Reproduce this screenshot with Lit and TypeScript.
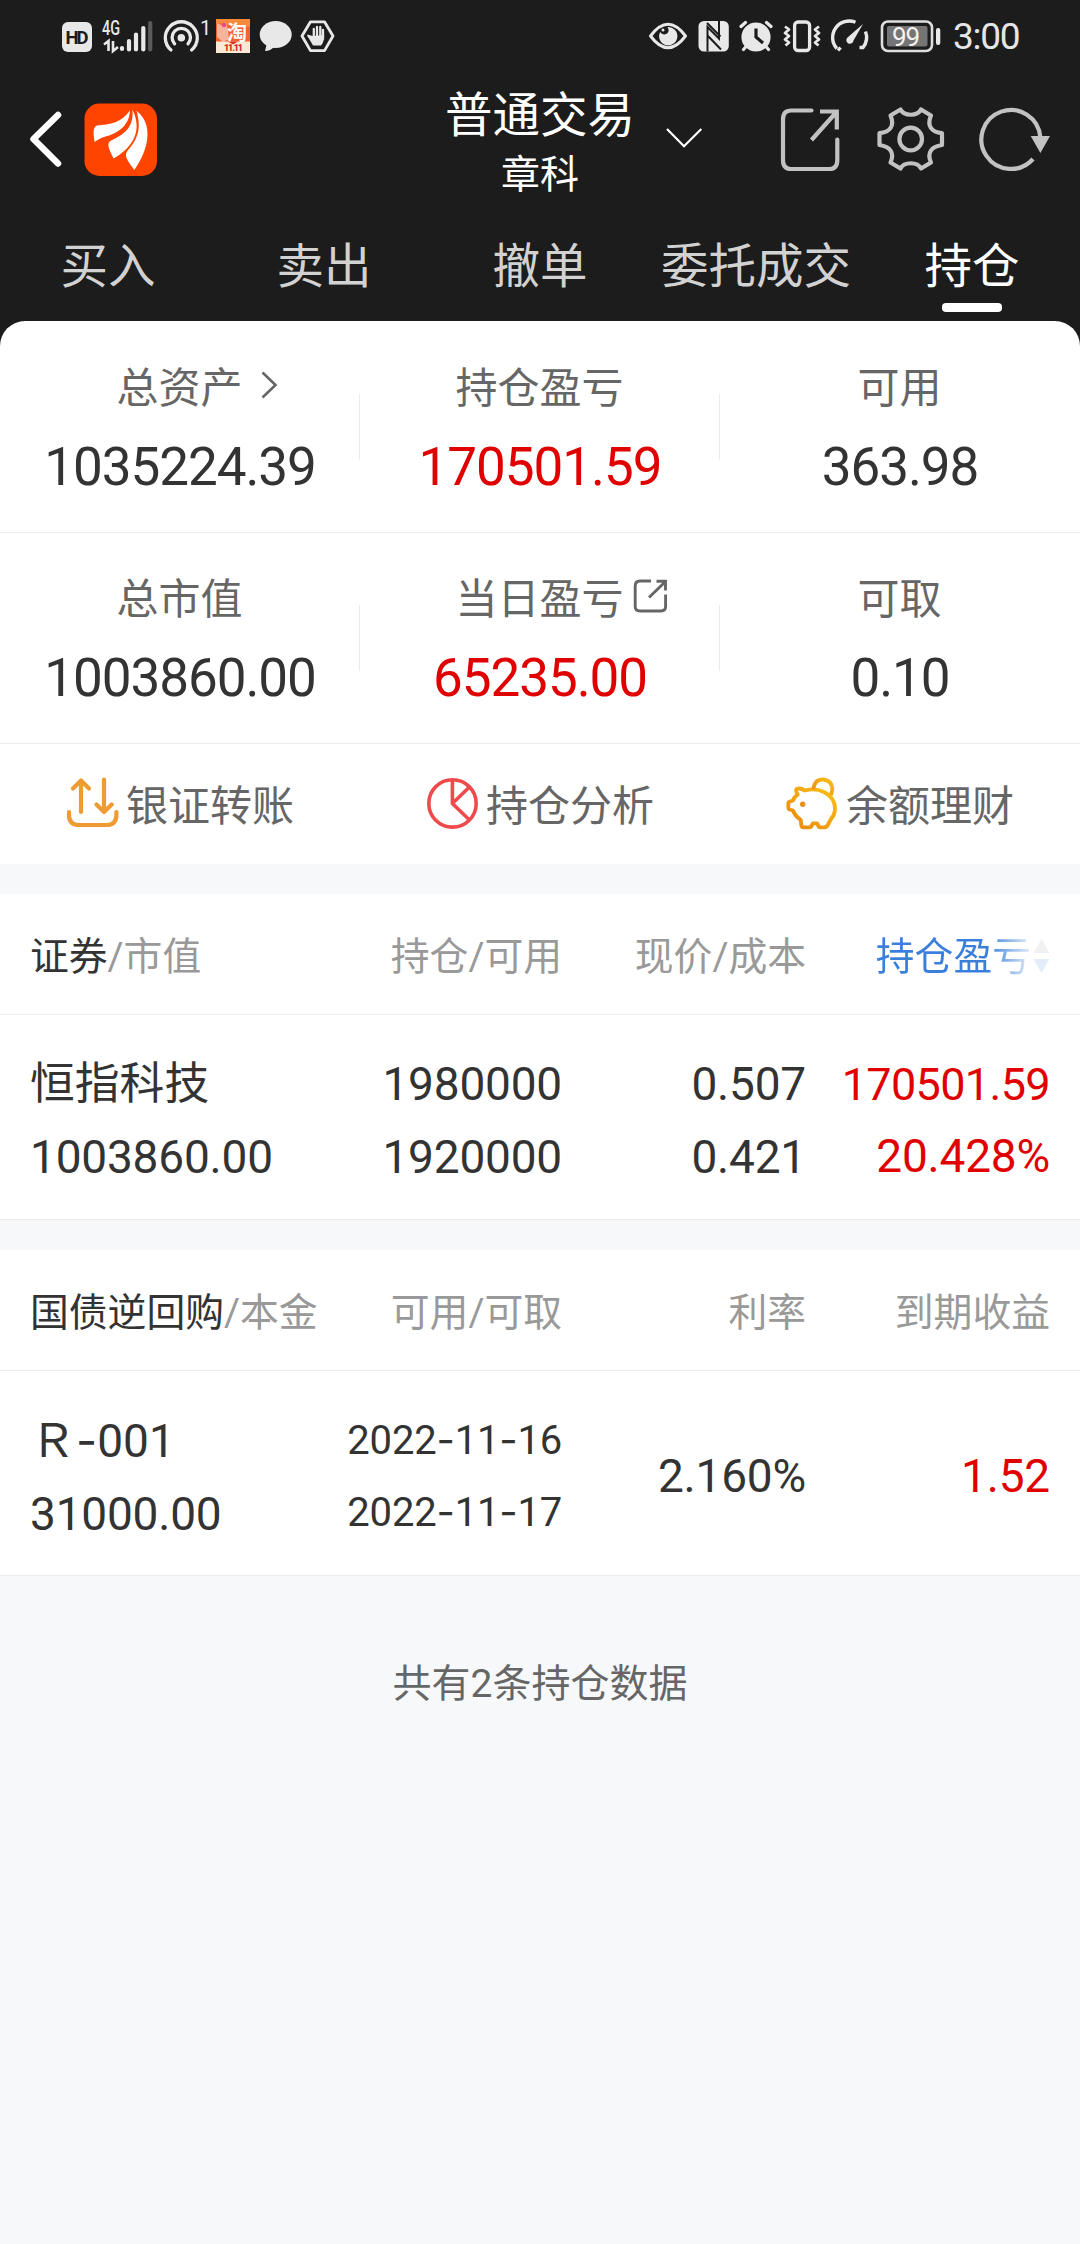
import { LitElement, html, svg, css, nothing } from 'lit';
import type { TemplateResult, SVGTemplateResult } from 'lit';
import { customElement, property } from 'lit/decorators.js';
import { classMap } from 'lit/directives/class-map.js';

/* Renders a slice of the artwork: x/y/w/h select the viewBox and the drawn size. */
const art = (x: number, y: number, w: number, h: number, body: SVGTemplateResult) =>
  html`<svg width=${w} height=${h} viewBox="${x} ${y} ${w} ${h}" fill="none">${body}</svg>`;

@customElement('status-bar')
export class StatusBar extends LitElement {
  static styles = css`
    :host { display: flex; height: 80px; justify-content: space-between; padding: 0 60px; }
    .group { display: flex; }
    svg { display: block; flex: none; }
    text { font-family: Roboto, "Noto Sans CJK SC", sans-serif; }
    .time { width: 67px; font: 400 37px/73px Roboto, sans-serif; color: #e6e6e6; letter-spacing: -1.3px; margin-left: 9px; white-space: nowrap; }
  `;
  render() {
    return html`
      <div class="group">
        ${art(60, 0, 36, 80, svg`
          <rect x="62" y="22" width="30" height="30" rx="6" fill="#e8e8e8"/>
          <text x="65.6" y="44" font-size="18.5" font-weight="700" fill="#1c1c1c" textLength="23">HD</text>`)}
        ${art(96, 0, 64, 80, svg`
          <text x="102" y="35" font-size="20" font-weight="500" fill="#e8e8e8" textLength="18" lengthAdjust="spacingAndGlyphs">4G</text>
          <path d="M104 44.500L108.500 41V51M113 41V51L118 47" stroke="#e8e8e8" stroke-width="2.600"/>
          <path d="M122 48v1M129 41v8.500M136 34.500v15M143.300 28v21.500" stroke="#e8e8e8" stroke-width="4.200" stroke-linecap="round"/>
          <path d="M150.200 23v26.500" stroke="#5a5a5a" stroke-width="4.200" stroke-linecap="round"/>`)}
        ${art(160, 0, 52, 80, svg`
          <circle cx="181.300" cy="37.700" r="3.800" fill="#e8e8e8"/>
          <path d="M174.600 43.800A9.200 9.200 0 1 1 188 43.800M171 50A16 16 0 1 1 191.600 50" stroke="#e8e8e8" stroke-width="3.300" stroke-linecap="round"/>
          <text x="200" y="35" font-size="20" fill="#e8e8e8">1</text>`)}
        ${art(212, 0, 44, 80, svg`
          <rect x="216" y="19" width="34" height="34" fill="#f1642f"/>
          <path d="M216 19h34v8l-34-4z" fill="#f58a3c"/>
          <path d="M217 23l4 2 5-3 2 8 1 9-6 3-6-5z" fill="#f7b39b"/>
          <circle cx="224" cy="25" r="2.300" fill="#ee4a7a"/>
          <rect x="216" y="41.500" width="34" height="11.500" fill="#fbe9d8"/>
          <path d="M228 41.500h10l-5 3z" fill="#e2301e"/>
          <text x="227" y="39.500" font-size="20" font-weight="700" fill="#fff">淘</text>
          <text x="224" y="51" font-size="9" font-weight="900" fill="#d9281c" textLength="19">11.11</text>`)}
        ${art(256, 0, 40, 80, svg`
          <ellipse cx="275.700" cy="34.500" rx="16" ry="13.500" fill="#e8e8e8"/>
          <path d="M267 43L265 51Q271 51 275 46z" fill="#e8e8e8"/>`)}
        ${art(296, 0, 42, 80, svg`
          <path d="M302 36L310.500 21.800H324.500L333 36L324.500 50.600H310.500z" stroke="#e8e8e8" stroke-width="2.800" stroke-linejoin="round"/>
          <path d="M313.800 29v9M317 26.800v10M320.300 27v10M323 30v9" stroke="#e8e8e8" stroke-width="2.300" stroke-linecap="round"/>
          <path d="M312.600 36L307.500 34.500Q306.500 35.500 309 38.500L313 45.500H321Q324.200 42 324.200 35z" fill="#e8e8e8"/>`)}
      </div>
      <div class="group">
        ${art(644, 0, 48, 80, svg`
          <path d="M650.500 36Q668 12.500 685.500 36Q668 59.500 650.500 36z" stroke="#e8e8e8" stroke-width="3" stroke-linejoin="round"/>
          <path d="M660 32A9.200 9.200 0 1 0 667.500 27Q670 31 667 33.500Q663 36 660 32z" fill="#e8e8e8"/>
          <circle cx="663" cy="30" r="1.500" fill="#e8e8e8"/>`)}
        ${art(692, 0, 42, 80, svg`
          <rect x="698.500" y="21" width="30.300" height="30.500" rx="5.500" fill="#e8e8e8"/>
          <path d="M707.500 51.500V27L719 38.500V20.500M707 23L720.500 36.500M708 36L721 49.500" stroke="#1c1c1c" stroke-width="2"/>`)}
        ${art(734, 0, 44, 80, svg`
          <circle cx="756" cy="37" r="14.600" fill="#e8e8e8"/>
          <path d="M741 26.500L745.500 22.500M771 26.500L766.500 22.500M746.500 46L743.500 49.500M765.500 46L768.500 49.500" stroke="#e8e8e8" stroke-width="3.200" stroke-linecap="round"/>
          <path d="M756 28.500V37L763 43" stroke="#1c1c1c" stroke-width="3.200"/>`)}
        ${art(778, 0, 48, 80, svg`
          <rect x="794.600" y="22" width="15" height="28.500" rx="3.500" stroke="#e8e8e8" stroke-width="3.300"/>
          <path d="M785 26.500l4 3-4 3.500 4 3-4 3.500 4 3-3.500 3M819 26.500l-4 3 4 3.500-4 3 4 3.500-4 3 3.500 3" stroke="#e8e8e8" stroke-width="2.800" stroke-linejoin="round"/>`)}
        ${art(826, 0, 48, 80, svg`
          <path d="M838 50.500L840.500 47.500M836.800 48.500A16.500 16.500 0 0 1 855.500 22.300M865.500 31.500A16.500 16.500 0 0 1 863 47.500L859.500 47.500" stroke="#e8e8e8" stroke-width="3.400"/>
          <path d="M863 24L853.500 40.500A3.600 3.600 0 1 1 847.500 37.500z" fill="#e8e8e8"/>`)}
        ${art(874, 0, 70, 80, svg`
          <rect x="882" y="21.500" width="50" height="29.500" rx="6" stroke="#dedede" stroke-width="2.600"/>
          <rect x="887" y="26" width="40.500" height="20.500" rx="2" fill="#757575"/>
          <rect x="936" y="28" width="4.300" height="17" rx="2" fill="#e8e8e8"/>
          <text x="892" y="45.500" font-size="26" fill="#f2f2f2" textLength="28">99</text>`)}
        <span class="time">3:00</span>
      </div>`;
  }
}

@customElement('title-bar')
export class TitleBar extends LitElement {
  static styles = css`
    :host { display: flex; height: 120px; justify-content: space-between; color: #fff;
      font-family: Roboto, "Noto Sans CJK SC", sans-serif; }
    .side { display: flex; width: 440px; box-sizing: border-box; }
    .side.end { justify-content: space-between; padding-left: 16px; }
    svg { display: block; flex: none; }
    .names { display: flex; flex-direction: column; align-items: center; white-space: nowrap; padding-top: 12px; }
    .account { font-size: 47.5px; line-height: 48px; }
    .holder { font-size: 39px; line-height: 40px; margin-top: 15px; }
  `;
  render() {
    return html`
      <div class="side">
        ${art(0, 80, 76, 120, svg`
          <path d="M58 115L33.500 139L58 163.500" stroke="#fff" stroke-width="6.500" stroke-linecap="round" stroke-linejoin="round"/>`)}
        ${art(76, 80, 90, 120, svg`
          <rect x="84.500" y="103.500" width="72.500" height="72.500" rx="15" fill="#ff4400"/>
          <g fill="#fff">
            <path d="M129.800 110.500C122 122.500 110 124.500 97 125.500C93 127 93 133 94.700 142C98 139.500 101 138 104 137C118 133.500 130 125 129.800 110.500z"/>
            <path d="M132.400 109.500C134 125 127 133.500 111 140.500C106 143.500 109 149 113.500 158.500C130 149 144 133 132.400 109.500z"/>
            <path d="M136.500 110.800C142 130 137 140 127 151.500C124 156 127.500 160.500 134.300 170C146 154 156 126 136.500 110.800z"/>
          </g>`)}
      </div>
      <div class="names">
        <span class="account">普通交易</span>
        <span class="holder">章科</span>
      </div>
      <div class="side end">
        ${art(656, 80, 56, 120, svg`
          <path d="M667 129L684 146.300L701.300 129" stroke="#fff" stroke-width="2.200"/>`)}
        ${art(770, 80, 310, 120, svg`
          <g stroke="#c2c2c2" stroke-width="4.200">
            <path d="M811.500 110.500H791Q783 110.500 783 119.500V160Q783 169 791 169H829.500Q837.300 169 837.300 160V139.500" stroke-linecap="round"/>
            <path d="M820 111.500H836.800V129.500M811.500 140L836.500 112" />
            <path d="M900.500 109.500C904 116.500 917.500 116.500 921 109.500L931 115.500C926.500 126 931.500 132 942 133.200V145C931.500 146.500 926.500 152.500 931 162.500L921 168.500C917.500 161.500 904 161.500 900.500 168.500L890.500 162.500C895 152.500 890 146.500 879.500 145V133.200C890 132 895 126 890.500 115.500z" stroke-linejoin="round"/>
            <circle cx="910.700" cy="139" r="11.300"/>
            <path d="M1033 159A29.500 29.500 0 1 1 1040.300 137"/>
          </g>
          <path d="M1030.700 136H1050L1040.400 153z" fill="#c2c2c2"/>`)}
      </div>`;
  }
}

@customElement('tab-strip')
export class TabStrip extends LitElement {
  static styles = css`
    :host { display: grid; grid-template-columns: repeat(5, 1fr); height: 121px;
      font-family: Roboto, "Noto Sans CJK SC", sans-serif; font-size: 47.5px; line-height: 48px; color: #d2d2d2; }
    .tab { display: flex; flex-direction: column; align-items: center; padding-top: 43px; gap: 12px; white-space: nowrap; }
    .active { color: #fff; }
    .active::after { content: ''; width: 60px; height: 9px; border-radius: 4px; background: #fff; }
  `;
  @property({ attribute: false }) tabs: string[] = [];
  @property({ type: Number }) active = 0;
  render() {
    return this.tabs.map((t, i) => html`<div class=${classMap({ tab: true, active: i === this.active })}>${t}</div>`);
  }
}

interface Metric { label: string; value: string; gain?: boolean; mark?: TemplateResult }

const chevron = html`<span class="mark chevron">${art(261, 369, 18, 32, svg`
  <path d="M262.500 372.500L275.500 385L262.500 397.500" stroke="#666" stroke-width="2.600"/>`)}</span>`;
const share = html`<span class="mark share">${art(632, 578, 36, 36, svg`
  <g stroke="#666" stroke-width="2.900">
    <path d="M651 581H640Q635.200 581 635.200 586V606.500Q635.200 611 640 611H661Q665.600 611 665.600 606.500V594.500"/>
    <path d="M656.500 581.300H665.500V590.500M649 597.500L665 582"/>
  </g>`)}</span>`;

const metrics: Metric[][] = [
  [
    { label: '总资产', value: '1035224.39', mark: chevron },
    { label: '持仓盈亏', value: '170501.59', gain: true },
    { label: '可用', value: '363.98' },
  ],
  [
    { label: '总市值', value: '1003860.00' },
    { label: '当日盈亏', value: '65235.00', gain: true, mark: share },
    { label: '可取', value: '0.10' },
  ],
];

const actions = [
  { label: '银证转账', icon: art(65, 777, 54, 54, svg`
      <path d="M80 812V781M72 788.500L80 780.500L88 788.500M103 779.500V811M95.500 804.500L103 812L110.700 804.500M68 812V815Q68 825 78 825H105.500Q115.400 825 115.400 815V812" stroke="#ee9b34" stroke-width="4.200" stroke-linecap="round" stroke-linejoin="round"/>`) },
  { label: '持仓分析', icon: art(425, 777, 54, 54, svg`
      <path d="M451.400 779.500V803.500L468.500 820M451.400 803.500L468.500 787" stroke="#f04a4c" stroke-width="3.600"/>
      <circle cx="451.500" cy="803.400" r="23.700" stroke="#f04a4c" stroke-width="3.600"/>`) },
  { label: '余额理财', icon: art(785, 777, 54, 54, svg`
      <defs><linearGradient id="gold" x1="0" y1="1" x2="1" y2="0"><stop offset="0" stop-color="#ea860f"/><stop offset="1" stop-color="#fbc015"/></linearGradient></defs>
      <g stroke="url(#gold)" stroke-width="3.800" stroke-linejoin="round">
        <path d="M795.500 789Q800 787.500 803.500 790.500Q814 787.500 823 792Q834.500 798 834 810Q833.500 815 830 819L826.500 825.500Q825.500 827.300 823 827.300H819.500Q817.500 827.300 817 825L816 823.300H812L811 825Q810.500 827.300 808 827.300H803Q800.500 827.300 800.300 825L799.800 820Q794 816 792 810.500L788.500 809.500Q787.300 809 787.300 807V803.500Q787.300 802 789 801.500L792 800.500Q793 797 796.800 794.500Q794.500 791.500 795.500 789z"/>
        <path d="M812.500 789Q813.500 779.300 822 779.300Q831.500 780.500 831.300 790L830 795"/>
      </g>
      <circle cx="801.700" cy="804.300" r="2.700" fill="#e98f1b"/>`) },
];

@customElement('asset-summary')
export class AssetSummary extends LitElement {
  static styles = css`
    :host { display: block; background: #fff; border-radius: 25px 25px 0 0; padding-top: 1px;
      font-family: Roboto, "Noto Sans CJK SC", sans-serif; }
    svg { display: block; }
    .row { display: grid; grid-template-columns: repeat(3, 1fr); height: 210px; border-bottom: 1px solid #ebebeb; }
    .cell { display: flex; flex-direction: column; align-items: center; padding-top: 46px; gap: 31px;
      background: linear-gradient(#ebebeb, #ebebeb) 100% 72px / 1px 66px no-repeat; }
    .cell:last-child { background: none; }
    .label { display: flex; margin-left: -1px; font-size: 42px; line-height: 42px; color: #666; white-space: nowrap; }
    .mark { flex: none; width: 0; overflow: visible; }
    .chevron svg { margin: 1px 0 0 18px; }
    .share svg { margin: -1px 0 0 8px; }
    .value { font-size: 53px; line-height: 52px; letter-spacing: -1.05px; color: #333; }
    .gain { color: #e00000; }
    .actions { display: grid; grid-template-columns: repeat(3, 1fr); height: 120px; }
    .action { display: flex; justify-content: center; align-items: center; gap: 7px; color: #666; }
    .name { font-size: 42px; line-height: 42px; padding-top: 5px; margin-left: -1px; }
  `;
  render() {
    return html`
      ${metrics.map((row) => html`<div class="row">${row.map((m) => html`
        <div class="cell">
          <div class="label">${m.label}${m.mark ?? nothing}</div>
          <div class=${classMap({ value: true, gain: !!m.gain })}>${m.value}</div>
        </div>`)}</div>`)}
      <div class="actions">${actions.map((a) => html`
        <div class="action">${a.icon}<span class="name">${a.label}</span></div>`)}</div>`;
  }
}

interface Column { strong?: string; text?: string; sorted?: boolean }
interface Cell { lines: string[]; kind: string }

/* Hyphens are set in a face with a wider dash than the digits' own. */
const dashed = (line: string) =>
  line.split('-').map((part, i) => html`${i ? html`<span class="dash">-</span>` : nothing}${part}`);

@customElement('position-table')
export class PositionTable extends LitElement {
  static styles = css`
    :host { display: block; background: #fff; font-family: Roboto, "Noto Sans CJK SC", sans-serif; }
    .grid { display: grid; grid-template-columns: 302px 230px 244px 244px; padding: 0 30px; border-bottom: 1px solid #ebebeb; white-space: nowrap; }
    .head { height: 120px; font-size: 38.8px; line-height: 39px; color: #999; }
    .body { height: 204px; color: #333; }
    .head > div { padding-top: 43px; text-align: right; }
    .head > div:first-child { text-align: left; }
    .strong { color: #333; }
    .head > .sorted { display: flex; justify-content: flex-end; gap: 2px; color: #3a7fdc; }
    .sorted .title { background: linear-gradient(90deg, #3a7fdc 72%, #e4edf9 100%); background-clip: text; color: transparent; }
    .arrows { display: block; margin-top: 1px; }
    .cell { display: flex; flex-direction: column; align-items: flex-end; padding-top: 39px; gap: 13px;
      font-size: 46px; line-height: 60px; letter-spacing: -0.2px; }
    .cell:first-child { align-items: flex-start; }
    .name { font-size: 44.8px; letter-spacing: 0; }
    .name.mixed { font-size: 46px; }
    .dash { font-family: Inter, sans-serif; }
    .gain { color: #e00000; padding-top: 40px; gap: 11px; }
    .long { font-size: 45px; letter-spacing: -0.65px; }
    .date { font-size: 40px; padding-top: 39px; gap: 11px; }
    .single { padding-top: 75px; }
  `;
  @property({ attribute: false }) columns: Column[] = [];
  @property({ attribute: false }) cells: Cell[] = [];
  render() {
    return html`
      <div class="grid head">${this.columns.map((c) => c.sorted
        ? html`<div class="sorted"><span class="title">${c.text}</span><svg class="arrows" width="17" height="36" viewBox="0 0 17 36">
            <path d="M8.500 1L16.500 15H0.500z" fill="#f1f1f1"/><path d="M0.500 21H16.500L8.500 35z" fill="#e3ecf8"/></svg></div>`
        : html`<div>${c.strong ? html`<span class="strong">${c.strong}</span>` : nothing}${c.text}</div>`)}</div>
      <div class="grid body">${this.cells.map((c) => html`
        <div class="cell ${c.kind}">${c.lines.map((l) => html`
          <span class=${classMap({
            name: /[^\x00-\x7f]/.test(l),
            mixed: l.includes('-'),
            long: c.kind === 'gain' && l.length > 8,
          })}>${dashed(l)}</span>`)}</div>`)}</div>`;
  }
}

const stockColumns: Column[] = [
  { strong: '证券', text: '/市值' }, { text: '持仓/可用' }, { text: '现价/成本' }, { text: '持仓盈亏', sorted: true },
];
const stockCells: Cell[] = [
  { lines: ['恒指科技', '1003860.00'], kind: '' },
  { lines: ['1980000', '1920000'], kind: '' },
  { lines: ['0.507', '0.421'], kind: '' },
  { lines: ['170501.59', '20.428%'], kind: 'gain' },
];
const repoColumns: Column[] = [
  { strong: '国债逆回购', text: '/本金' }, { text: '可用/可取' }, { text: '利率' }, { text: '到期收益' },
];
const repoCells: Cell[] = [
  { lines: ['Ｒ-001', '31000.00'], kind: '' },
  { lines: ['2022-11-16', '2022-11-17'], kind: 'date' },
  { lines: ['2.160%'], kind: 'single' },
  { lines: ['1.52'], kind: 'gain single' },
];

@customElement('app-root')
export class AppRoot extends LitElement {
  static styles = css`
    :host { display: flex; flex-direction: column; width: 1080px; height: 2244px; overflow: hidden; background: #f7f8fa; }
    .top { background: #1c1c1c; }
    .stage { background: linear-gradient(#1c1c1c 50px, #fff 50px); }
    .tables { display: flex; flex-direction: column; gap: 30px; padding-top: 30px; }
    .count { padding-top: 89px; text-align: center; color: #666;
      font: 39px/39px Roboto, "Noto Sans CJK SC", sans-serif; }
  `;
  render() {
    return html`
      <header class="top">
        <status-bar></status-bar>
        <title-bar></title-bar>
        <tab-strip .tabs=${['买入', '卖出', '撤单', '委托成交', '持仓']} .active=${4}></tab-strip>
      </header>
      <div class="stage"><asset-summary></asset-summary></div>
      <main class="tables">
        <position-table .columns=${stockColumns} .cells=${stockCells}></position-table>
        <position-table .columns=${repoColumns} .cells=${repoCells}></position-table>
      </main>
      <footer class="count">共有2条持仓数据</footer>`;
  }
}
